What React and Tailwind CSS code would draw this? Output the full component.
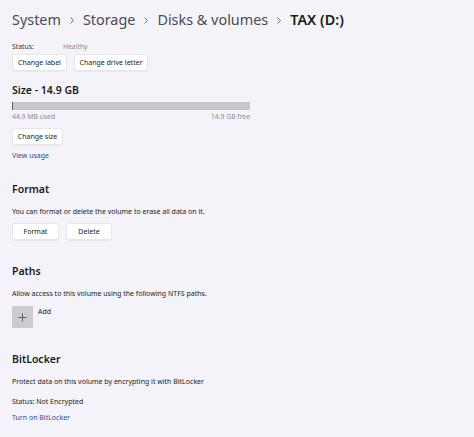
import React from "react";

const font = { fontFamily: '"Noto Sans", "Open Sans", sans-serif' };

const Crumb = ({ children, current }) => (
  <span className={current ? "font-semibold text-[#1b1b1b]" : "text-[#4b4b4f]"}>{children}</span>
);

const Chevron = () => (
  <svg width="6" height="9" viewBox="0 0 6 9" className="mx-[8px] mt-[1px]">
    <path d="M1.5 1.5 L4.5 4.5 L1.5 7.5" fill="none" stroke="#6b6b70" strokeWidth="1" />
  </svg>
);

const Btn = ({ children, className = "" }) => (
  <button
    className={`h-[17px] whitespace-nowrap rounded-[3px] border border-[#e6e6ec] bg-white text-[7px] leading-none text-[#222] shadow-[0_1px_1px_rgba(0,0,0,0.05)] ${className}`}
  >
    {children}
  </button>
);

const Heading = ({ children, className = "" }) => (
  <h2 className={`h-[12px] text-[10.5px] font-semibold leading-[12px] text-[#1b1b1b] ${className}`}>
    {children}
  </h2>
);

const Line = ({ children, link, className = "" }) => (
  <p className={`h-[8px] text-[7px] leading-[8px] ${link ? "text-[#2f4f9a]" : "text-[#222]"} ${className}`}>
    {children}
  </p>
);

const App = () => {
  return (
    <div
      className="relative h-[437px] w-[474px] overflow-hidden bg-[#f3f3f9] px-[12px] text-[#1b1b1b]"
      style={font}
    >
      {/* breadcrumb */}
      <div className="mt-[12px] flex h-[16px] items-center text-[14.4px] leading-none">
        <Crumb>System</Crumb>
        <Chevron />
        <Crumb>Storage</Crumb>
        <Chevron />
        <Crumb>Disks &amp; volumes</Crumb>
        <Chevron />
        <Crumb current>TAX (D:)</Crumb>
      </div>

      <div className="mt-[15px] flex h-[8px] items-center text-[6.8px] leading-none">
        <span className="w-[51px] text-[#333]">Status:</span>
        <span className="text-[#8a8a8f]">Healthy</span>
      </div>

      <div className="mt-[3px] flex gap-[7px]">
        <Btn className="w-[55px]">Change label</Btn>
        <Btn className="w-[74px]">Change drive letter</Btn>
      </div>

      <Heading className="mt-[13px]">Size - 14.9 GB</Heading>

      <div className="mt-[6px] flex h-[8px] w-[238px] bg-[#c6c6cb]">
        <div className="h-full w-[1px] bg-[#5a5a60]" />
      </div>
      <div className="mt-[3px] flex h-[8px] w-[238px] items-center justify-between text-[6.8px] leading-none text-[#8a8a8f]">
        <span>44.9 MB used</span>
        <span>14.9 GB free</span>
      </div>

      <Btn className="mt-[5px] w-[51px]">Change size</Btn>

      <Line link className="mt-[7px]">View usage</Line>

      <Heading className="mt-[23px]">Format</Heading>
      <Line className="mt-[13px]">You can format or delete the volume to erase all data on it.</Line>
      <div className="mt-[7px] flex gap-[7px]">
        <Btn className="w-[47px]">Format</Btn>
        <Btn className="w-[46px]">Delete</Btn>
      </div>

      <Heading className="mt-[25px]">Paths</Heading>
      <Line className="mt-[13px]">Allow access to this volume using the following NTFS paths.</Line>
      <div className="mt-[8px] flex items-start gap-[5px]">
        <div className="flex h-[22px] w-[21px] items-center justify-center bg-[#cbcbd0]">
          <svg width="9" height="9" viewBox="0 0 9 9">
            <path d="M4.5 0.5 V8.5 M0.5 4.5 H8.5" stroke="#555" strokeWidth="0.9" />
          </svg>
        </div>
        <Line className="mt-[2px]">Add</Line>
      </div>

      <Heading className="mt-[25px]">BitLocker</Heading>
      <Line className="mt-[13px]">Protect data on this volume by encrypting it with BitLocker</Line>
      <Line className="mt-[12px]">Status: Not Encrypted</Line>
      <Line link className="mt-[8px]">Turn on BitLocker</Line>
    </div>
  );
};

export default App;
